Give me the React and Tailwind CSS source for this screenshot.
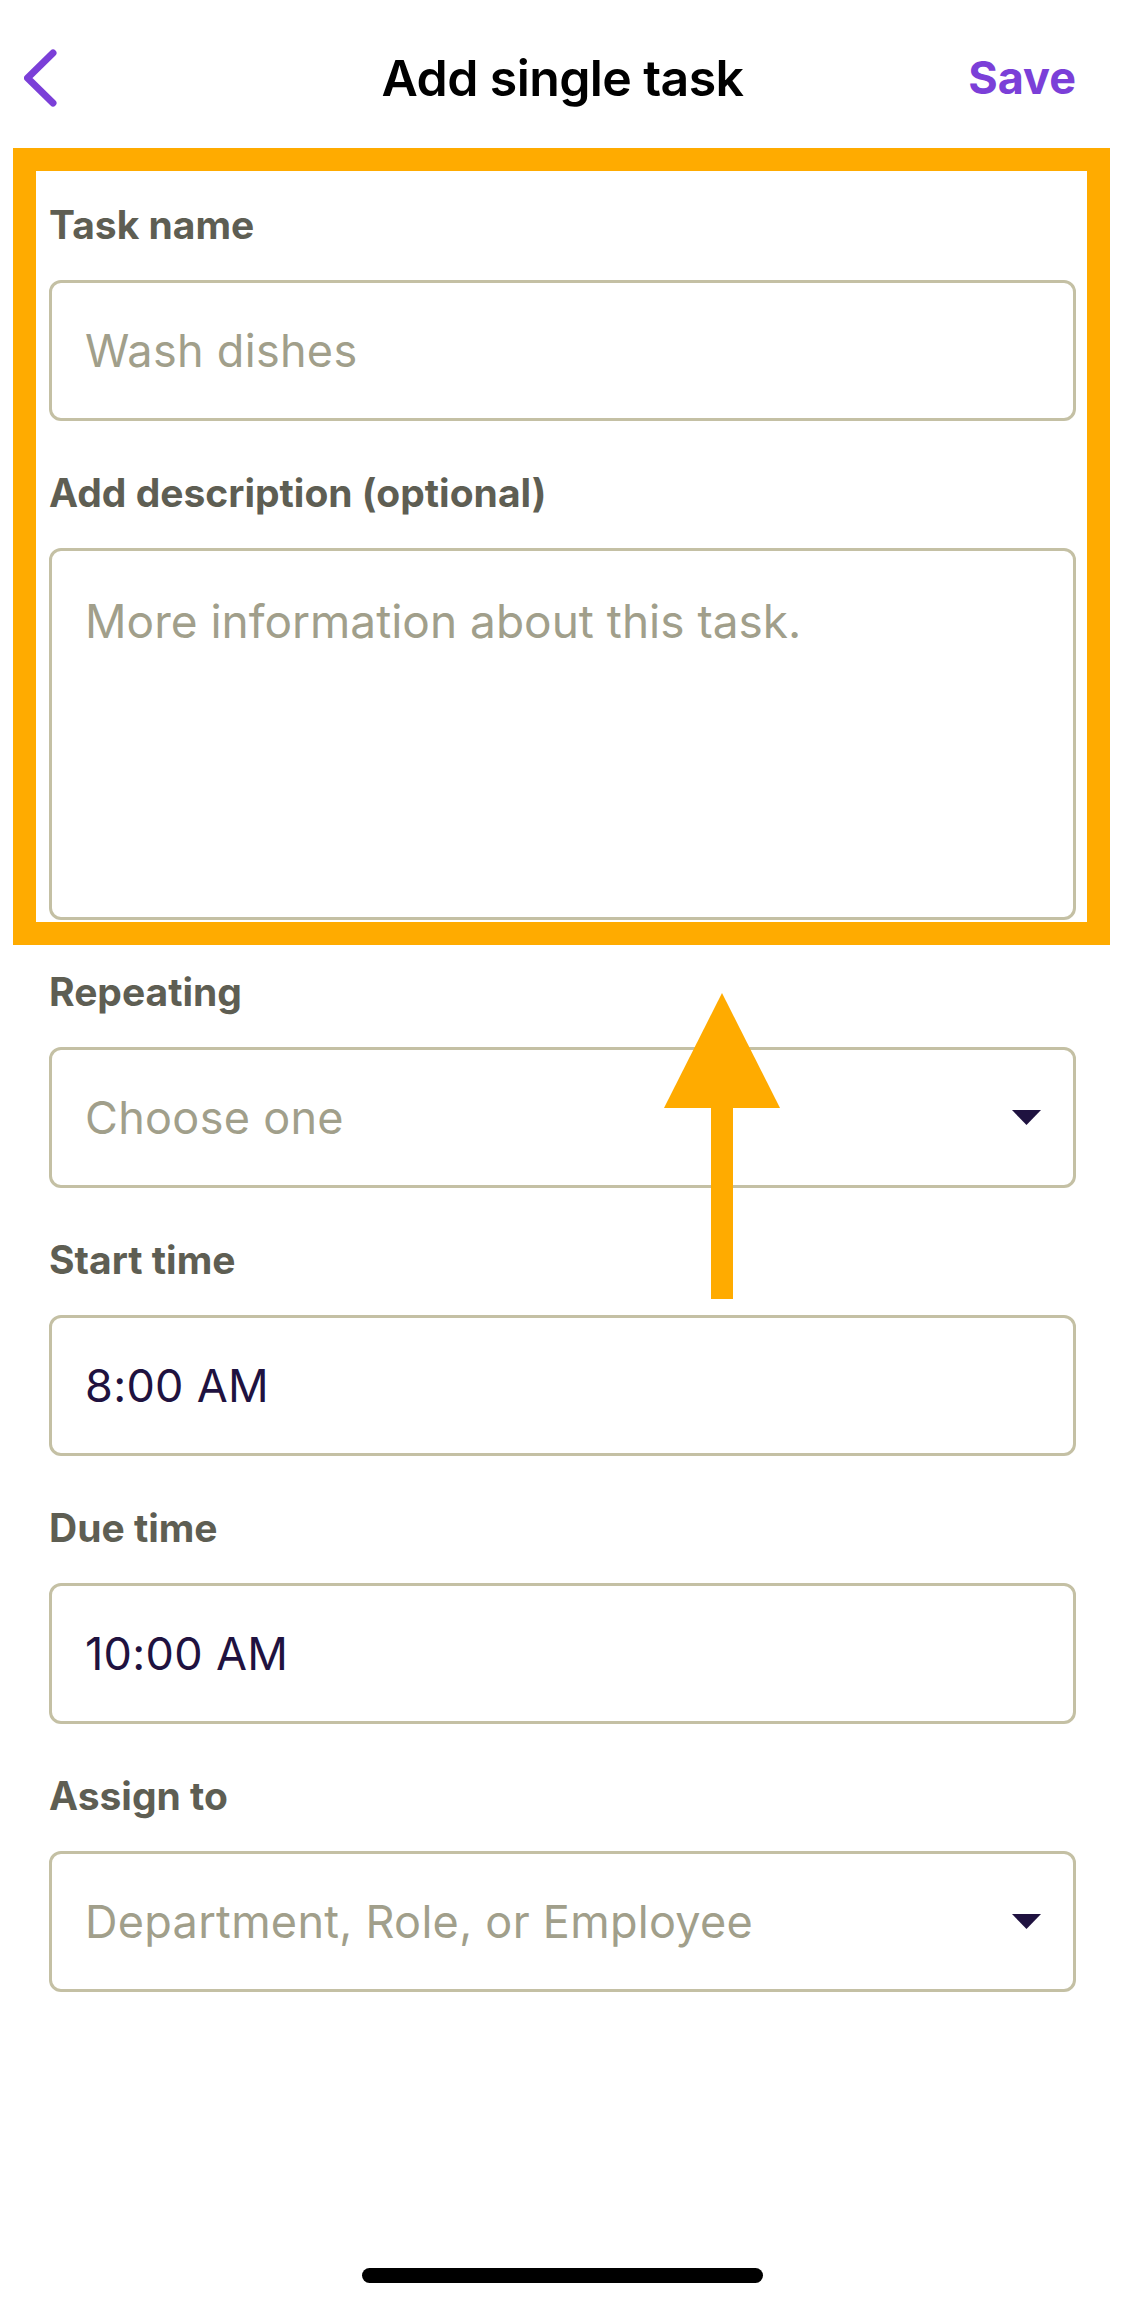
const LABEL = "text-[39px] leading-[46px] font-bold text-[#5E5E53]";
const BOX = "flex h-[141px] items-center justify-between rounded-[12px] border-[3px] border-[#C4C0A4] pl-[33px] pr-[32px]";
const VALUE = "text-[45px] leading-[1.2] tracking-[0.3px]";

function Caret() {
  return (
    <svg width="29" height="15" viewBox="0 0 29 15">
      <polygon points="0,0 29,0 14.5,15" fill="#1F1240" />
    </svg>
  );
}

function Field({ label, children }) {
  return (
    <div className="flex flex-col gap-[32px]">
      <div className={LABEL}>{label}</div>
      {children}
    </div>
  );
}

export default function App() {
  return (
    <div className="relative w-[1125px] h-[2308px] bg-white overflow-hidden font-[Inter,sans-serif]">
      <header className="grid h-[156px] grid-cols-[1fr_auto_1fr] items-center">
        <div className="flex pl-[24px]">
          <svg width="36" height="60" viewBox="0 0 36 60">
            <polyline
              points="29,5 3.5,30 29,55"
              fill="none"
              stroke="#7B3FD8"
              strokeWidth="7"
              strokeLinecap="round"
              strokeLinejoin="round"
            />
          </svg>
        </div>
        <h1 className="text-[50px] font-semibold text-black tracking-[-0.6px]">Add single task</h1>
        <div className="flex justify-end pr-[49px]">
          <button className="text-[45px] font-bold text-[#7B3FD8]">Save</button>
        </div>
      </header>

      <main className="flex flex-col gap-[49px] px-[49px] pt-[46px]">
        <Field label="Task name">
          <div className={BOX}>
            <span className={`${VALUE} text-[#A19F8B]`}>Wash dishes</span>
          </div>
        </Field>

        <Field label="Add description (optional)">
          <div className="h-[372px] rounded-[12px] border-[3px] border-[#C4C0A4] pl-[33px] pt-[43px]">
            <div className="text-[46px] leading-[1.2] text-[#A19F8B]">More information about this task.</div>
          </div>
        </Field>

        <Field label="Repeating">
          <div className={BOX}>
            <span className={`${VALUE} text-[#A19F8B]`}>Choose one</span>
            <Caret />
          </div>
        </Field>

        <Field label="Start time">
          <div className={BOX}>
            <span className={`${VALUE} text-[#1F1240]`}>8:00 AM</span>
          </div>
        </Field>

        <Field label="Due time">
          <div className={BOX}>
            <span className={`${VALUE} text-[#1F1240]`}>10:00 AM</span>
          </div>
        </Field>

        <Field label="Assign to">
          <div className={BOX}>
            <span className={`${VALUE} text-[#A19F8B]`}>Department, Role, or Employee</span>
            <Caret />
          </div>
        </Field>
      </main>

      <div className="mt-[276px] flex justify-center">
        <div className="h-[15px] w-[401px] rounded-full bg-black" />
      </div>

      {/* annotation overlay */}
      <div className="pointer-events-none absolute left-[13px] top-[148px] h-[797px] w-[1097px] border-[23px] border-[#FFAB00]" />
      <svg className="pointer-events-none absolute left-[664px] top-[993px]" width="116" height="306" viewBox="0 0 116 306">
        <polygon points="58,0 116,115 0,115" fill="#FFAB00" />
        <rect x="47" y="114" width="22" height="192" fill="#FFAB00" />
      </svg>
    </div>
  );
}
